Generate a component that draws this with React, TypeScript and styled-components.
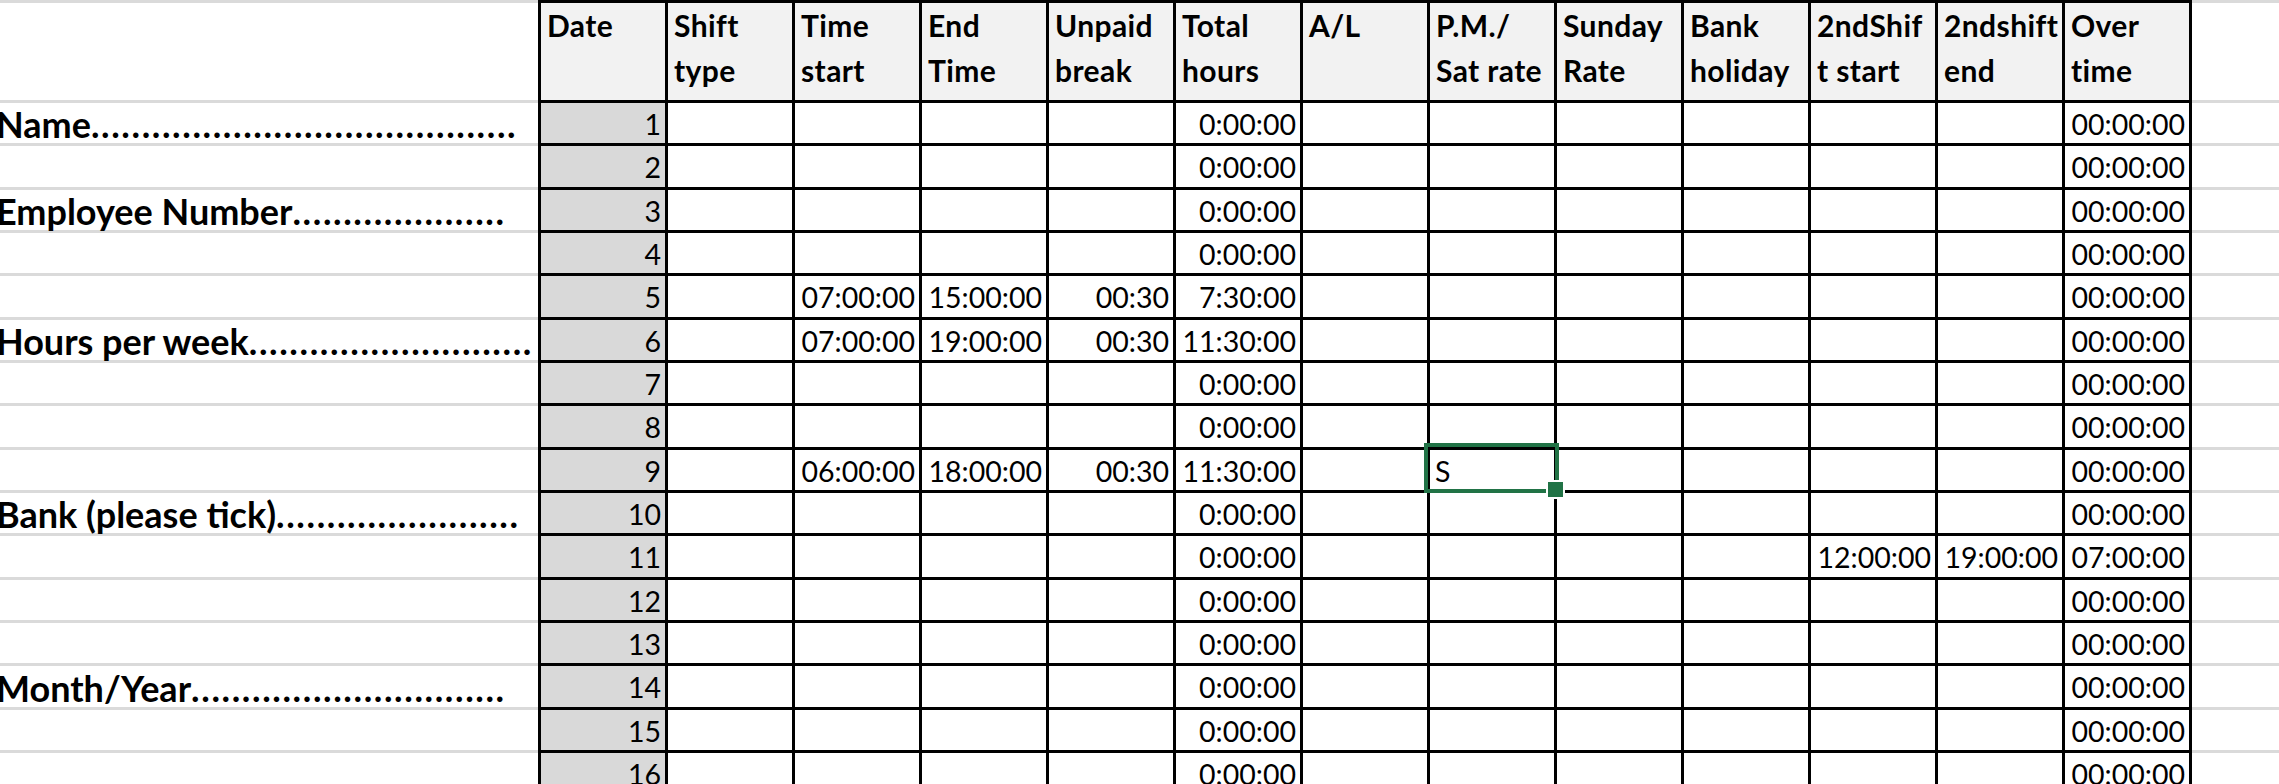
import React from 'react';
import styled, { createGlobalStyle, css } from 'styled-components';

const GlobalStyle = createGlobalStyle`
  html, body {
    margin: 0;
    padding: 0;
    background: #ffffff;
    overflow: hidden;
  }
  body {
    font-family: Lato, "Open Sans", "Liberation Sans", sans-serif;
    color: #000000;
  }
`;

const GRID = '#dadada';
const INK = '#000000';
const EXCEL_GREEN = '#217346';

type ColKey =
  | 'date' | 'shift' | 'start' | 'end' | 'brk' | 'total' | 'al'
  | 'pm' | 'sun' | 'bank' | 's2' | 'e2' | 'over';

const columns: { key: ColKey; title: string[] }[] = [
  { key: 'date', title: ['Date'] },
  { key: 'shift', title: ['Shift', 'type'] },
  { key: 'start', title: ['Time', 'start'] },
  { key: 'end', title: ['End', 'Time'] },
  { key: 'brk', title: ['Unpaid', 'break'] },
  { key: 'total', title: ['Total', 'hours'] },
  { key: 'al', title: ['A/L'] },
  { key: 'pm', title: ['P.M./', 'Sat rate'] },
  { key: 'sun', title: ['Sunday', 'Rate'] },
  { key: 'bank', title: ['Bank', 'holiday'] },
  { key: 's2', title: ['2ndShif', 't start'] },
  { key: 'e2', title: ['2ndshift', 'end'] },
  { key: 'over', title: ['Over', 'time'] },
];

const filled: Record<number, Partial<Record<ColKey, string>>> = {
  5: { start: '07:00:00', end: '15:00:00', brk: '00:30', total: '7:30:00' },
  6: { start: '07:00:00', end: '19:00:00', brk: '00:30', total: '11:30:00' },
  9: { start: '06:00:00', end: '18:00:00', brk: '00:30', total: '11:30:00', pm: 'S' },
  11: { s2: '12:00:00', e2: '19:00:00', over: '07:00:00' },
};

const labels: Record<number, { text: string; dots: number }> = {
  1: { text: 'Name', dots: 42 },
  3: { text: 'Employee Number', dots: 21 },
  6: { text: 'Hours per week', dots: 28 },
  10: { text: 'Bank (please tick)', dots: 24 },
  14: { text: 'Month/Year', dots: 31 },
};

const leftAligned: ColKey[] = ['pm'];

const Sheet = styled.div`
  width: 2279px;
  height: 784px;
  overflow: hidden;
  display: flex;
  flex-direction: column;
`;

const Row = styled.div<{ $header?: boolean }>`
  flex: none;
  display: grid;
  grid-template-columns: 538px 130px repeat(12, 127px) 1fr;
  grid-template-rows: 100%;
  height: ${(p) => (p.$header ? '103px' : '43.333px')};
`;

const GridCell = styled.div<{ $header?: boolean }>`
  box-sizing: border-box;
  border-bottom: 3px solid ${GRID};
  border-top: ${(p) => (p.$header ? `3px solid ${GRID}` : 'none')};
  min-width: 0;
  min-height: 0;
`;

const LabelCell = styled(GridCell)`
  display: flex;
  align-items: flex-end;
  white-space: nowrap;
  padding-bottom: 1px;
`;

const LabelText = styled.span`
  margin-left: -4px;
  font-size: 36px;
  line-height: 36px;
  font-weight: 700;
`;

const Leader = styled.span`
  letter-spacing: 1.6px;
`;

const HeaderCell = styled.div<{ $first?: boolean }>`
  box-sizing: border-box;
  background: #f2f2f2;
  border-top: 3px solid ${INK};
  border-bottom: 3px solid ${INK};
  border-right: 3px solid ${INK};
  border-left: ${(p) => (p.$first ? `3px solid ${INK}` : 'none')};
  padding: 0 0 0 6px;
  font-size: 30px;
  letter-spacing: 0.4px;
  font-weight: 700;
  line-height: 45px;
  white-space: nowrap;
  overflow: hidden;
  min-height: 0;
  display: flex;
  flex-direction: column;
`;

const Cell = styled.div<{ $first?: boolean; $shade?: boolean; $left?: boolean; $selected?: boolean }>`
  box-sizing: border-box;
  min-height: 0;
  background: ${(p) => (p.$shade ? '#d9d9d9' : '#ffffff')};
  border-bottom: 3px solid ${INK};
  border-right: 3px solid ${INK};
  border-left: ${(p) => (p.$first ? `3px solid ${INK}` : 'none')};
  display: flex;
  align-items: flex-end;
  justify-content: ${(p) => (p.$left ? 'flex-start' : 'flex-end')};
  padding: 0 4px 2px 5px;
  font-size: 28.5px;
  line-height: 1.2;
  white-space: nowrap;
  ${(p) =>
    p.$selected &&
    css`
      position: relative;
    `}
`;

const Selection = styled.div`
  position: absolute;
  z-index: 2;
  left: -6px;
  top: -7px;
  width: 135px;
  height: 50px;
  box-sizing: border-box;
  border: 4px solid ${EXCEL_GREEN};
  pointer-events: none;
`;

const FillHandle = styled.div`
  position: absolute;
  z-index: 3;
  left: 118px;
  top: 32px;
  width: 15px;
  height: 15px;
  background: ${EXCEL_GREEN};
  box-shadow: 0 0 0 2px #ffffff;
`;

function cellValue(row: number, key: ColKey): string {
  if (key === 'date') return String(row);
  const f = filled[row]?.[key];
  if (f !== undefined) return f;
  if (key === 'total') return '0:00:00';
  if (key === 'over') return '00:00:00';
  return '';
}

export default function App() {
  const rows = Array.from({ length: 16 }, (_, i) => i + 1);
  return (
    <>
      <GlobalStyle />
      <Sheet>
        <Row $header>
          <GridCell $header />
          {columns.map((c, i) => (
            <HeaderCell key={c.key} $first={i === 0}>
              {c.title.map((line) => (
                <span key={line}>{line}</span>
              ))}
            </HeaderCell>
          ))}
          <GridCell $header />
        </Row>
        {rows.map((r) => {
          const label = labels[r];
          return (
            <Row key={r}>
              <LabelCell>
                {label && (
                  <LabelText>
                    {label.text}
                    <Leader>{'.'.repeat(label.dots)}</Leader>
                  </LabelText>
                )}
              </LabelCell>
              {columns.map((c, i) => {
                const selected = r === 9 && c.key === 'pm';
                return (
                  <Cell
                    key={c.key}
                    $first={i === 0}
                    $shade={c.key === 'date'}
                    $left={leftAligned.includes(c.key)}
                    $selected={selected}
                  >
                    {cellValue(r, c.key)}
                    {selected && (
                      <>
                        <Selection />
                        <FillHandle />
                      </>
                    )}
                  </Cell>
                );
              })}
              <GridCell />
            </Row>
          );
        })}
      </Sheet>
    </>
  );
}
